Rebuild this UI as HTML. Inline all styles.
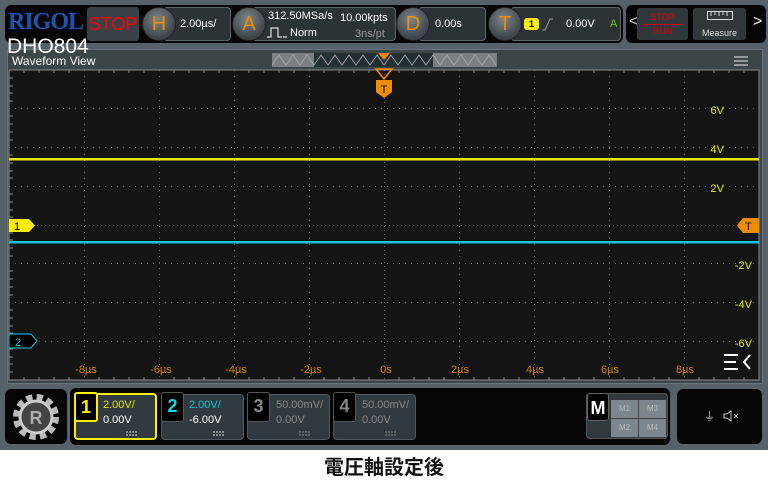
<!DOCTYPE html>
<html><head><meta charset="utf-8"><style>
*{margin:0;padding:0;box-sizing:border-box}
body{width:768px;height:491px;background:#fff;position:relative;overflow:hidden;font-family:"Liberation Sans",sans-serif}
.a{position:absolute}
.scr{left:0;top:0;width:768px;height:450px;background:#56616a}
.blk{background:#050505;border-radius:6px}
.box{background:#2c3337;border:1px solid #59646b;border-radius:4px;color:#fff;font-size:11px}
.circ{width:34px;height:34px;border-radius:50%;background:radial-gradient(circle at 45% 35%,#7d868c,#3d4449 70%);border:1px solid #222;color:#f08c00;font-size:20px;text-align:center;line-height:32px}
.ch{background:#313a3f;border:1px solid #505a60;border-radius:4px}
.num{background:#000;border:1px solid #555;border-radius:3px;font-size:18px;font-weight:bold;text-align:center;line-height:26px}
.t{font-size:11px;line-height:14px}
</style></head><body>
<div class="a scr"></div>
<!-- top bar -->
<div class="a blk" style="left:5px;top:5px;width:618px;height:38px"></div>
<div class="a" style="left:8px;top:10px;font-family:'Liberation Serif',serif;font-weight:bold;font-size:24px;color:#1c55b0;letter-spacing:-1px;line-height:24px">RIGOL</div>
<div class="a" style="left:87px;top:7px;width:52px;height:34px;background:#3b4247;border-radius:3px;color:#f00;font-size:18px;text-align:center;line-height:34px">STOP</div>
<div class="a box" style="left:163px;top:7px;width:68px;height:34px;padding:10px 0 0 16px">2.00µs/</div>
<div class="a circ" style="left:142px;top:7px">H</div>
<div class="a box" style="left:252px;top:7px;width:144px;height:34px"></div>
<div class="a t" style="left:268px;top:9px;color:#fff">312.50MSa/s</div>
<div class="a t" style="left:340px;top:11px;color:#fff">10.00kpts</div>
<div class="a t" style="left:290px;top:26px;color:#fff">Norm</div>
<div class="a t" style="left:355px;top:27px;color:#999">3ns/pt</div>
<svg class="a" style="left:266px;top:26px" width="22" height="12"><path d="M1 11H5V2H12V11H16M17 11h4" stroke="#ddd" fill="none" stroke-width="1.2"/></svg>
<div class="a circ" style="left:232px;top:7px">A</div>
<div class="a box" style="left:418px;top:7px;width:68px;height:34px;padding:10px 0 0 16px">0.00s</div>
<div class="a circ" style="left:396px;top:7px">D</div>
<div class="a box" style="left:510px;top:7px;width:111px;height:34px"></div>
<div class="a" style="left:524px;top:18px;width:15px;height:12px;background:#ffee00;border-radius:3px;font-size:9px;text-align:center;line-height:12px;font-weight:bold">1</div>
<svg class="a" style="left:541px;top:17px" width="12" height="14"><path d="M1 13H4L9 2H12" stroke="#999" fill="none"/></svg>
<div class="a t" style="left:566px;top:17px;color:#fff">0.00V</div>
<div class="a t" style="left:610px;top:17px;color:#7ac000">A</div>
<div class="a circ" style="left:488px;top:7px">T</div>
<div class="a blk" style="left:626px;top:5px;width:140px;height:38px"></div>
<div class="a" style="left:629px;top:13px;color:#ccc;font-size:16px">&lt;</div>
<div class="a" style="left:753px;top:13px;color:#fff;font-size:16px">&gt;</div>
<div class="a" style="left:637px;top:8px;width:51px;height:32px;background:#31383c;border-radius:3px;color:#d00;font-size:9px;text-align:center;line-height:13px;padding-top:3px">STOP<div style="border-top:1px solid #c00;margin:0 5px">RUN</div></div>
<div class="a" style="left:693px;top:8px;width:53px;height:32px;background:#31383c;border-radius:3px;color:#ddd;font-size:9px;text-align:center;padding-top:20px">Measure</div>
<svg class="a" style="left:707px;top:11px" width="26" height="10"><rect x="0.5" y="0.5" width="25" height="8" fill="none" stroke="#ddd"/><path d="M4 1v4M8 1v3M12 1v4M16 1v3M20 1v4" stroke="#ddd"/></svg>
<!-- waveform window -->
<div class="a" style="left:7px;top:49px;width:756px;height:335px;background:#3c4548;border:1px solid #6a757b"></div>
<div class="a" style="left:7px;top:36px;color:#fff;font-size:21px;line-height:21px">DHO804</div>
<div class="a" style="left:12px;top:54px;color:#fff;font-size:12px">Waveform View</div>
<svg class="a" style="left:272px;top:53px" width="225" height="14"><rect width="225" height="14" fill="#233033"/><rect width="42" height="14" fill="#7b8085"/><rect x="161" width="64" height="14" fill="#7b8085"/><path d="M0 12 L7 2 L14 12 L21 2 L28 12 L35 2 L42 12 L49 2 L56 12 L63 2 L70 12 L77 2 L84 12 L91 2 L98 12 L105 2 L112 12 L119 2 L126 12 L133 2 L140 12 L147 2 L154 12 L161 2 L168 12 L175 2 L182 12 L189 2 L196 12 L203 2 L210 12 L217 2 L224 12" stroke="#aaa" fill="none" stroke-width="0.8"/><path d="M106 0h12l-6 7z" fill="#f08c00"/></svg>
<svg class="a" style="left:733px;top:55px" width="16" height="12"><path d="M1 2h14M1 6h14M1 10h14" stroke="#ccc" stroke-width="1.3"/></svg>
<svg class="a" style="left:0;top:0" width="768" height="400">
<rect x="9" y="70" width="750" height="310" fill="#141414"/>
<g stroke="#666" stroke-width="1" stroke-dasharray="1 5">
<path d="M84.5 70V380M159.5 70V380M234.5 70V380M309.5 70V380M459.5 70V380M534.5 70V380M609.5 70V380M684.5 70V380"/>
<path d="M9 108.5H759M9 147.5H759M9 186.5H759M9 263.5H759M9 302.5H759M9 341.5H759"/>
</g>
<path d="M384.5 70V380M9 225.5H759" stroke="#555" stroke-dasharray="1 3"/>
<path d="M9 70V380H759V70H9" stroke="#888" fill="none"/>
<g stroke="#888"><path d="M9 78h4M9 86h4M9 93h4M9 101h4M9 116h4M9 124h4M9 132h4M9 140h4M9 155h4M9 163h4M9 171h4M9 178h4M9 194h4M9 202h4M9 210h4M9 217h4M9 233h4M9 240h4M9 248h4M9 256h4M9 271h4M9 279h4M9 287h4M9 295h4M9 310h4M9 318h4M9 326h4M9 333h4M9 349h4M9 357h4M9 364h4M9 372h4"/>
<path d="M24 70v3M39 70v3M54 70v3M69 70v3M99 70v3M114 70v3M129 70v3M144 70v3M174 70v3M189 70v3M204 70v3M219 70v3M249 70v3M264 70v3M279 70v3M294 70v3M324 70v3M339 70v3M354 70v3M369 70v3M399 70v3M414 70v3M429 70v3M444 70v3M474 70v3M489 70v3M504 70v3M519 70v3M549 70v3M564 70v3M579 70v3M594 70v3M624 70v3M639 70v3M654 70v3M669 70v3M699 70v3M714 70v3M729 70v3M744 70v3"/>
<path d="M24 380v-3M39 380v-3M54 380v-3M69 380v-3M99 380v-3M114 380v-3M129 380v-3M144 380v-3M174 380v-3M189 380v-3M204 380v-3M219 380v-3M249 380v-3M264 380v-3M279 380v-3M294 380v-3M324 380v-3M339 380v-3M354 380v-3M369 380v-3M399 380v-3M414 380v-3M429 380v-3M444 380v-3M474 380v-3M489 380v-3M504 380v-3M519 380v-3M549 380v-3M564 380v-3M579 380v-3M594 380v-3M624 380v-3M639 380v-3M654 380v-3M669 380v-3M699 380v-3M714 380v-3M729 380v-3M744 380v-3"/></g>
<rect x="9" y="158" width="750" height="2.5" fill="#e8e800"/>
<rect x="9" y="241" width="750" height="2.5" fill="#10c8d8"/>
<path d="M376 69h16l-8 10z" fill="none" stroke="#f08c00" stroke-width="1.5"/>
<path d="M376 80h16v12l-8 6l-8-6z" fill="#f08c00"/>
<text x="384" y="93" font-size="11" text-anchor="middle" fill="#111" font-family="Liberation Sans">T</text>
<path d="M9 219h20l6 6.5l-6 6.5H9z" fill="#ffee00"/>
<text x="14" y="230" font-size="11" fill="#000" font-family="Liberation Sans">1</text>
<path d="M9 334h22l6 7l-6 7H9z" fill="#000" stroke="#10c8d8"/>
<text x="15" y="346" font-size="11" fill="#10c8d8" font-family="Liberation Sans">2</text>
<path d="M759 218h-16l-6 7.5l6 7.5h16z" fill="#f08c00"/>
<text x="745" y="230" font-size="11" fill="#111" font-family="Liberation Sans">T</text>
<g font-family="Liberation Sans" font-size="11" fill="#e8e800" text-anchor="end"><text x="724" y="114">6V</text><text x="724" y="153">4V</text><text x="724" y="192">2V</text><text x="752" y="269">-2V</text><text x="752" y="308">-4V</text><text x="752" y="347">-6V</text></g>
<g font-family="Liberation Sans" font-size="11" fill="#d48000" text-anchor="middle"><text x="86" y="373">-8µs</text><text x="161" y="373">-6µs</text><text x="236" y="373">-4µs</text><text x="311" y="373">-2µs</text><text x="386" y="373">0s</text><text x="460" y="373">2µs</text><text x="535" y="373">4µs</text><text x="610" y="373">6µs</text><text x="685" y="373">8µs</text></g>
<path d="M724 355h14M724 362h12M724 369h14M750 355l-6 7l6 7" stroke="#fff" stroke-width="2" fill="none"/>
</svg>
<!-- bottom -->
<div class="a blk" style="left:5px;top:389px;width:62px;height:55px"></div>
<svg class="a" style="left:10px;top:391px" width="52" height="52"><circle cx="26" cy="26" r="19" fill="none" stroke="#bbb" stroke-width="8" stroke-dasharray="6 4"/><circle cx="26" cy="26" r="16" fill="#444" stroke="#ccc" stroke-width="3"/><text x="26" y="33" font-size="18" font-weight="bold" fill="#aaa" text-anchor="middle" font-family="Liberation Sans">R</text></svg>
<div class="a blk" style="left:70px;top:388px;width:600px;height:57px"></div>
<div class="a ch" style="left:74px;top:393px;width:83px;height:47px;border:2px solid #ffee00"></div>
<div class="a num" style="left:74px;top:392px;width:24px;height:30px;border:2px solid #ffee00;color:#ffee00">1</div>
<div class="a t" style="left:103px;top:398px;color:#e8e800">2.00V/</div><div class="a t" style="left:103px;top:413px;color:#fff">0.00V</div>
<div class="a ch" style="left:161px;top:394px;width:83px;height:46px"></div>
<div class="a num" style="left:161px;top:392px;width:23px;height:30px;color:#10d8e8">2</div>
<div class="a t" style="left:189px;top:398px;color:#10c8d8">2.00V/</div><div class="a t" style="left:189px;top:413px;color:#fff">-6.00V</div>
<div class="a ch" style="left:247px;top:394px;width:83px;height:46px"></div>
<div class="a num" style="left:247px;top:392px;width:23px;height:30px;color:#888">3</div>
<div class="a t" style="left:276px;top:398px;color:#888">50.00mV/</div><div class="a t" style="left:276px;top:413px;color:#888">0.00V</div>
<div class="a ch" style="left:333px;top:394px;width:83px;height:46px"></div>
<div class="a num" style="left:333px;top:392px;width:23px;height:30px;color:#888">4</div>
<div class="a t" style="left:362px;top:398px;color:#888">50.00mV/</div><div class="a t" style="left:362px;top:413px;color:#888">0.00V</div>
<svg class="a" style="left:0;top:430px" width="420" height="8"><g stroke-width="1"><path d="M126 2h12M126 5h12" stroke="#ddd" stroke-dasharray="2 1"/><path d="M213 2h12M213 5h12" stroke="#ddd" stroke-dasharray="2 1"/><path d="M299 2h12M299 5h12" stroke="#888" stroke-dasharray="2 1"/><path d="M385 2h12M385 5h12" stroke="#888" stroke-dasharray="2 1"/></g></svg>
<div class="a" style="left:586px;top:393px;width:82px;height:46px;background:#31393d;border:1px solid #555;border-radius:4px"></div>
<div class="a" style="left:587px;top:393px;width:22px;height:28px;background:#000;border:1px solid #666;border-radius:3px;color:#fff;font-weight:bold;font-size:18px;text-align:center;line-height:28px">M</div>
<div class="a" style="left:611px;top:400px;width:55px;height:37px;display:grid;grid-template-columns:1fr 1fr;gap:1px;background:#444">
<div style="background:#7c868c;color:#bbb;font-size:8px;text-align:center;line-height:18px">M1</div><div style="background:#7c868c;color:#bbb;font-size:8px;text-align:center;line-height:18px">M3</div><div style="background:#7c868c;color:#bbb;font-size:8px;text-align:center;line-height:18px">M2</div><div style="background:#7c868c;color:#bbb;font-size:8px;text-align:center;line-height:18px">M4</div></div>
<div class="a blk" style="left:677px;top:389px;width:85px;height:55px"></div>
<div class="a" style="left:704px;top:408px;color:#ccc;font-size:11px">⏚</div>
<svg class="a" style="left:723px;top:410px" width="16" height="12"><path d="M1 4h3l4-3v10l-4-3H1z" fill="none" stroke="#ccc"/><path d="M11 4l4 4M15 4l-4 4" stroke="#ccc"/></svg>
<div class="a" style="left:0;top:454px;width:768px;text-align:center;font-family:'Liberation Sans','Noto Sans CJK JP',sans-serif;font-weight:bold;font-size:20px;color:#111;line-height:28px">電圧軸設定後</div>
</body></html>
